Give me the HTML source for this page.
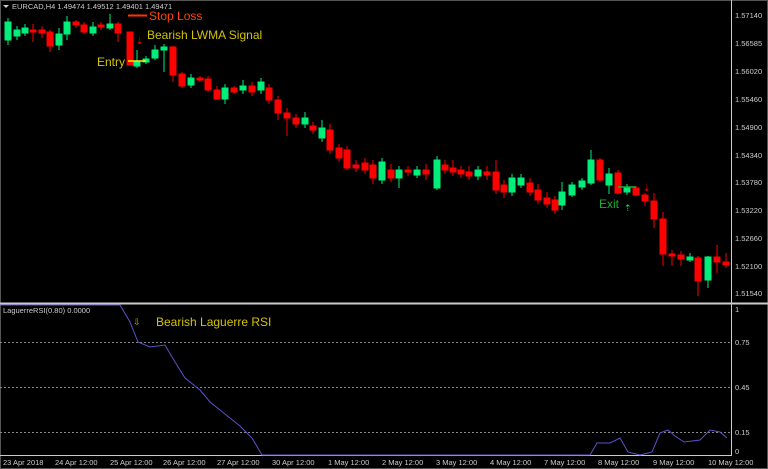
<!DOCTYPE html><html><head><style>
html,body{margin:0;padding:0;background:#000;width:768px;height:469px;overflow:hidden}
svg{display:block}
text{font-family:"Liberation Sans",sans-serif}
</style></head><body>
<svg width="768" height="469" xmlns="http://www.w3.org/2000/svg">
<rect width="768" height="469" fill="#000"/>
<rect x="0.5" y="0.5" width="767" height="468" fill="none" stroke="#555"/>
<line x1="731.5" y1="0" x2="731.5" y2="456" stroke="#ccc"/>
<line x1="0" y1="303.5" x2="768" y2="303.5" stroke="#ccc" stroke-width="2"/>
<line x1="0" y1="455.5" x2="732" y2="455.5" stroke="#ccc"/>
<g stroke="#888" stroke-dasharray="2,2"><line x1="0" y1="342.5" x2="731" y2="342.5"/><line x1="0" y1="387.5" x2="731" y2="387.5"/><line x1="0" y1="432.5" x2="731" y2="432.5"/></g>
<g id="c" stroke-width="1">
<g fill="#00ee7a" stroke="#00ee7a">
<line x1="8" y1="18" x2="8" y2="45"/><rect x="5" y="22" width="6" height="18"/>
<line x1="17" y1="26" x2="17" y2="40"/><rect x="14" y="30" width="6" height="6"/>
<line x1="25" y1="24" x2="25" y2="36"/><rect x="22" y="28" width="6" height="5"/>
<line x1="59" y1="28" x2="59" y2="50"/><rect x="56" y="34" width="6" height="11"/>
<line x1="67" y1="16" x2="67" y2="40"/><rect x="64" y="22" width="6" height="12"/>
<line x1="93" y1="22" x2="93" y2="36"/><rect x="90" y="27" width="6" height="6"/>
<line x1="110" y1="14" x2="110" y2="30"/><rect x="107" y="24" width="6" height="4"/>
<line x1="137" y1="50" x2="137" y2="68"/><rect x="134" y="62" width="6" height="4"/>
<line x1="146" y1="56" x2="146" y2="64"/><rect x="143" y="59" width="6" height="3"/>
<line x1="155" y1="45" x2="155" y2="60"/><rect x="152" y="50" width="6" height="8"/>
<line x1="164" y1="44" x2="164" y2="72"/><rect x="161" y="47" width="6" height="3"/>
<line x1="191" y1="74" x2="191" y2="88"/><rect x="188" y="78" width="6" height="7"/>
<line x1="225" y1="84" x2="225" y2="104"/><rect x="222" y="88" width="6" height="11"/>
<line x1="243" y1="80" x2="243" y2="94"/><rect x="240" y="86" width="6" height="4"/>
<line x1="261" y1="78" x2="261" y2="94"/><rect x="258" y="82" width="6" height="8"/>
<line x1="305" y1="112" x2="305" y2="128"/><rect x="302" y="118" width="6" height="6"/>
<line x1="322" y1="120" x2="322" y2="142"/><rect x="319" y="128" width="6" height="10"/>
<line x1="382" y1="158" x2="382" y2="184"/><rect x="379" y="162" width="6" height="18"/>
<line x1="399" y1="166" x2="399" y2="188"/><rect x="396" y="170" width="6" height="8"/>
<line x1="417" y1="166" x2="417" y2="178"/><rect x="414" y="170" width="6" height="5"/>
<line x1="437" y1="156" x2="437" y2="190"/><rect x="434" y="160" width="6" height="28"/>
<line x1="478" y1="166" x2="478" y2="180"/><rect x="475" y="170" width="6" height="6"/>
<line x1="512" y1="174" x2="512" y2="196"/><rect x="509" y="178" width="6" height="14"/>
<line x1="521" y1="174" x2="521" y2="188"/><rect x="518" y="178" width="6" height="7"/>
<line x1="562" y1="182" x2="562" y2="210"/><rect x="559" y="192" width="6" height="13"/>
<line x1="572" y1="182" x2="572" y2="197"/><rect x="569" y="185" width="6" height="10"/>
<line x1="582" y1="178" x2="582" y2="190"/><rect x="579" y="181" width="6" height="6"/>
<line x1="591" y1="150" x2="591" y2="185"/><rect x="588" y="160" width="6" height="23"/>
<line x1="609" y1="168" x2="609" y2="194"/><rect x="606" y="174" width="6" height="11"/>
<line x1="627" y1="184" x2="627" y2="195"/><rect x="624" y="188" width="6" height="4"/>
<line x1="690" y1="253" x2="690" y2="262"/><rect x="687" y="257" width="6" height="3"/>
<line x1="708" y1="256" x2="708" y2="288"/><rect x="705" y="257" width="6" height="23"/>
</g>
<g fill="#ff0000" stroke="#ff0000">
<line x1="33" y1="24" x2="33" y2="42"/><rect x="30" y="30" width="6" height="2"/>
<line x1="42" y1="26" x2="42" y2="38"/><rect x="39" y="30" width="6" height="3"/>
<line x1="50" y1="30" x2="50" y2="52"/><rect x="47" y="32" width="6" height="14"/>
<line x1="76" y1="20" x2="76" y2="28"/><rect x="73" y="22" width="6" height="3"/>
<line x1="84" y1="22" x2="84" y2="34"/><rect x="81" y="25" width="6" height="7"/>
<line x1="101" y1="22" x2="101" y2="30"/><rect x="98" y="25" width="6" height="2"/>
<line x1="118" y1="22" x2="118" y2="42"/><rect x="115" y="24" width="6" height="9"/>
<rect x="127" y="32" width="6" height="33"/>
<line x1="173" y1="46" x2="173" y2="82"/><rect x="170" y="47" width="6" height="28"/>
<line x1="182" y1="72" x2="182" y2="88"/><rect x="179" y="74" width="6" height="12"/>
<line x1="200" y1="76" x2="200" y2="82"/><rect x="197" y="78" width="6" height="2"/>
<line x1="208" y1="76" x2="208" y2="92"/><rect x="205" y="79" width="6" height="11"/>
<line x1="217" y1="86" x2="217" y2="100"/><rect x="214" y="90" width="6" height="9"/>
<line x1="234" y1="86" x2="234" y2="94"/><rect x="231" y="88" width="6" height="4"/>
<line x1="252" y1="82" x2="252" y2="96"/><rect x="249" y="86" width="6" height="6"/>
<line x1="269" y1="84" x2="269" y2="104"/><rect x="266" y="88" width="6" height="12"/>
<line x1="278" y1="96" x2="278" y2="120"/><rect x="275" y="100" width="6" height="13"/>
<line x1="287" y1="108" x2="287" y2="136"/><rect x="284" y="113" width="6" height="5"/>
<line x1="296" y1="114" x2="296" y2="128"/><rect x="293" y="118" width="6" height="6"/>
<line x1="313" y1="122" x2="313" y2="134"/><rect x="310" y="126" width="6" height="4"/>
<line x1="330" y1="124" x2="330" y2="154"/><rect x="327" y="130" width="6" height="20"/>
<line x1="339" y1="144" x2="339" y2="162"/><rect x="336" y="148" width="6" height="10"/>
<line x1="347" y1="146" x2="347" y2="170"/><rect x="344" y="150" width="6" height="18"/>
<line x1="356" y1="160" x2="356" y2="172"/><rect x="353" y="165" width="6" height="3"/>
<line x1="365" y1="158" x2="365" y2="174"/><rect x="362" y="163" width="6" height="7"/>
<line x1="373" y1="160" x2="373" y2="184"/><rect x="370" y="165" width="6" height="13"/>
<line x1="391" y1="164" x2="391" y2="182"/><rect x="388" y="170" width="6" height="8"/>
<line x1="408" y1="166" x2="408" y2="176"/><rect x="405" y="170" width="6" height="2"/>
<line x1="426" y1="164" x2="426" y2="180"/><rect x="423" y="170" width="6" height="4"/>
<line x1="445" y1="160" x2="445" y2="174"/><rect x="442" y="165" width="6" height="5"/>
<line x1="453" y1="160" x2="453" y2="176"/><rect x="450" y="168" width="6" height="4"/>
<line x1="461" y1="166" x2="461" y2="178"/><rect x="458" y="170" width="6" height="4"/>
<line x1="469" y1="166" x2="469" y2="180"/><rect x="466" y="172" width="6" height="4"/>
<line x1="487" y1="166" x2="487" y2="180"/><rect x="484" y="172" width="6" height="3"/>
<line x1="496" y1="160" x2="496" y2="194"/><rect x="493" y="172" width="6" height="18"/>
<line x1="504" y1="180" x2="504" y2="198"/><rect x="501" y="185" width="6" height="7"/>
<line x1="530" y1="178" x2="530" y2="196"/><rect x="527" y="183" width="6" height="9"/>
<line x1="538" y1="184" x2="538" y2="204"/><rect x="535" y="190" width="6" height="10"/>
<line x1="547" y1="192" x2="547" y2="208"/><rect x="544" y="198" width="6" height="6"/>
<line x1="555" y1="196" x2="555" y2="214"/><rect x="552" y="200" width="6" height="10"/>
<line x1="600" y1="158" x2="600" y2="182"/><rect x="597" y="160" width="6" height="20"/>
<line x1="618" y1="170" x2="618" y2="194"/><rect x="615" y="173" width="6" height="20"/>
<line x1="636" y1="186" x2="636" y2="196"/><rect x="633" y="188" width="6" height="7"/>
<line x1="645" y1="193" x2="645" y2="206"/><rect x="642" y="195" width="6" height="6"/>
<line x1="654" y1="193" x2="654" y2="228"/><rect x="651" y="201" width="6" height="18"/>
<line x1="663" y1="212" x2="663" y2="266"/><rect x="660" y="219" width="6" height="35"/>
<line x1="672" y1="250" x2="672" y2="266"/><rect x="669" y="254" width="6" height="2"/>
<line x1="681" y1="251" x2="681" y2="266"/><rect x="678" y="255" width="6" height="4"/>
<line x1="698" y1="256" x2="698" y2="296"/><rect x="695" y="258" width="6" height="23"/>
<line x1="717" y1="245" x2="717" y2="273"/><rect x="714" y="257" width="6" height="5"/>
<line x1="726" y1="253" x2="726" y2="268"/><rect x="723" y="262" width="6" height="3"/>
</g></g>
<line x1="128" y1="15.5" x2="147" y2="15.5" stroke="#ff3300" stroke-width="2"/>
<text x="149" y="20" fill="#ff4400" font-size="12">Stop Loss</text>
<text x="147" y="39" fill="#d4c400" font-size="12">Bearish LWMA Signal</text>
<text x="136" y="44" fill="#ff0000" font-size="9">⇣</text>
<text x="97" y="66" fill="#d4c400" font-size="12">Entry</text>
<line x1="128" y1="61" x2="146" y2="61" stroke="#ffee00" stroke-width="1.5"/>
<text x="599" y="208" fill="#18b030" font-size="12">Exit</text>
<line x1="618" y1="187" x2="636" y2="187" stroke="#18b030" stroke-width="1.5"/>
<text x="624" y="211" fill="#00ee7a" font-size="9">⇡</text>
<text x="643" y="191" fill="#ff0000" font-size="9">⇣</text>
<polygon points="3,5 9,5 6,8" fill="#ccc"/>
<text x="12" y="9" fill="#ccc" font-size="7.5">EURCAD,H4  1.49474 1.49512 1.49401 1.49471</text>
<text x="3" y="313" fill="#ccc" font-size="7.5">LaguerreRSI(0.80) 0.0000</text>
<text x="133" y="325" fill="#bfa800" font-size="9">⇩</text>
<text x="156" y="326" fill="#d4c400" font-size="12">Bearish Laguerre RSI</text>
<polyline fill="none" stroke="#5b52c8" stroke-width="1" points="0,305 120,305 130,322 138,342 150,347 165,345 175,362 185,378 200,390 210,402 225,414 240,426 252,438 262,455 590,455 597,443 610,443 620,438 628,452 640,455 652,452 660,433 668,430 675,436 684,442 700,440 710,430 720,432 727,438"/>
<g fill="#ccc" font-size="7.5">
<text x="735" y="18">1.57140</text><text x="735" y="46">1.56585</text><text x="735" y="74">1.56020</text><text x="735" y="102">1.55460</text><text x="735" y="130">1.54900</text><text x="735" y="158">1.54340</text><text x="735" y="185">1.53780</text><text x="735" y="213">1.53220</text><text x="735" y="241">1.52660</text><text x="735" y="269">1.52100</text><text x="735" y="296">1.51540</text>
<text x="735" y="312">1</text><text x="735" y="345">0.75</text><text x="735" y="390">0.45</text><text x="735" y="435">0.15</text><text x="735" y="454">0</text>
<text x="3" y="465">23 Apr 2018</text><text x="55" y="465">24 Apr 12:00</text><text x="110" y="465">25 Apr 12:00</text><text x="163" y="465">26 Apr 12:00</text><text x="217" y="465">27 Apr 12:00</text><text x="272" y="465">30 Apr 12:00</text><text x="328" y="465">1 May 12:00</text><text x="382" y="465">2 May 12:00</text><text x="436" y="465">3 May 12:00</text><text x="490" y="465">4 May 12:00</text><text x="544" y="465">7 May 12:00</text><text x="598" y="465">8 May 12:00</text><text x="653" y="465">9 May 12:00</text><text x="708" y="465">10 May 12:00</text>
</g>
</svg>
</body></html>
